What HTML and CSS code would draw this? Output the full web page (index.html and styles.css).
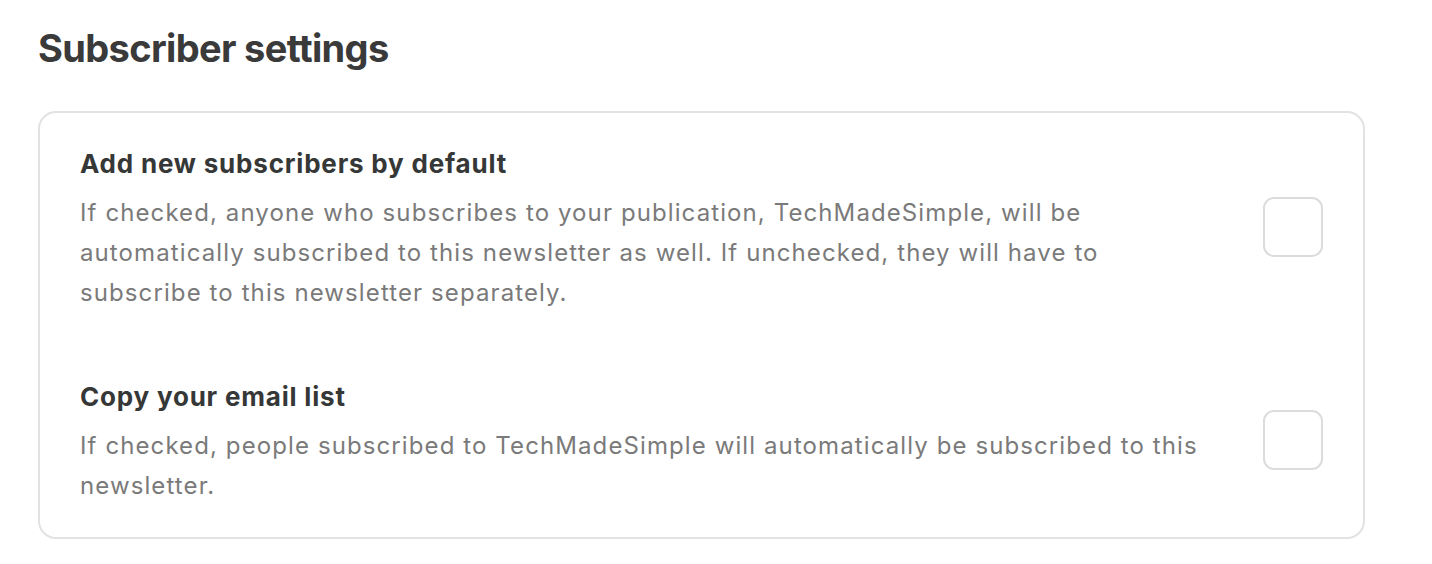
FILE: index.html
```html
<!DOCTYPE html>
<html lang="en">
<head>
<meta charset="utf-8">
<title>Subscriber settings</title>
<link rel="stylesheet" href="styles.css">
</head>
<body>
<main class="page">
  <h1 class="page-title">Subscriber settings</h1>
  <section class="card">
    <div class="setting">
      <div class="setting-text">
        <h2 class="setting-title">Add new subscribers by default</h2>
        <p class="setting-desc">If checked, anyone who subscribes to your publication, TechMadeSimple, will be automatically subscribed to this newsletter as well. If unchecked, they will have to subscribe to this newsletter separately.</p>
      </div>
      <span class="checkbox" role="checkbox" aria-checked="false"></span>
    </div>
    <div class="setting">
      <div class="setting-text">
        <h2 class="setting-title">Copy your email list</h2>
        <p class="setting-desc">If checked, people subscribed to TechMadeSimple will automatically be subscribed to this newsletter.</p>
      </div>
      <span class="checkbox" role="checkbox" aria-checked="false"></span>
    </div>
  </section>
</main>
</body>
</html>
```
FILE: styles.css
```css
html, body {
  margin: 0;
  background: #ffffff;
}
body {
  font-family: Inter, "Noto Sans", "Liberation Sans", sans-serif;
  color: #363737;
}
.page {
  padding: 22px 67px 0 38px;
}
.page-title {
  margin: 0;
  font-size: 38px;
  line-height: 52px;
  font-weight: 700;
  color: #3a3a3a;
  letter-spacing: -0.65px;
}
.card {
  margin-top: 37px;
  border: 2px solid #e2e2e2;
  border-radius: 18px;
  padding: 33px 40px 31px 40px;
  display: flex;
  flex-direction: column;
  gap: 66px;
}
.setting {
  display: flex;
  align-items: center;
  gap: 52px;
}
.setting-text {
  flex: 1;
}
.setting-title {
  margin: 0 0 11px;
  font-size: 26px;
  line-height: 36px;
  font-weight: 700;
  letter-spacing: 0.8px;
  color: #363737;
}
.setting-desc {
  margin: 0;
  font-size: 24px;
  line-height: 40px;
  letter-spacing: 1.1px;
  color: #7a7a7a;
}
.checkbox {
  flex: none;
  width: 56px;
  height: 56px;
  margin-bottom: 5px;
  border: 2px solid #dcdcdc;
  border-radius: 11px;
}
```
